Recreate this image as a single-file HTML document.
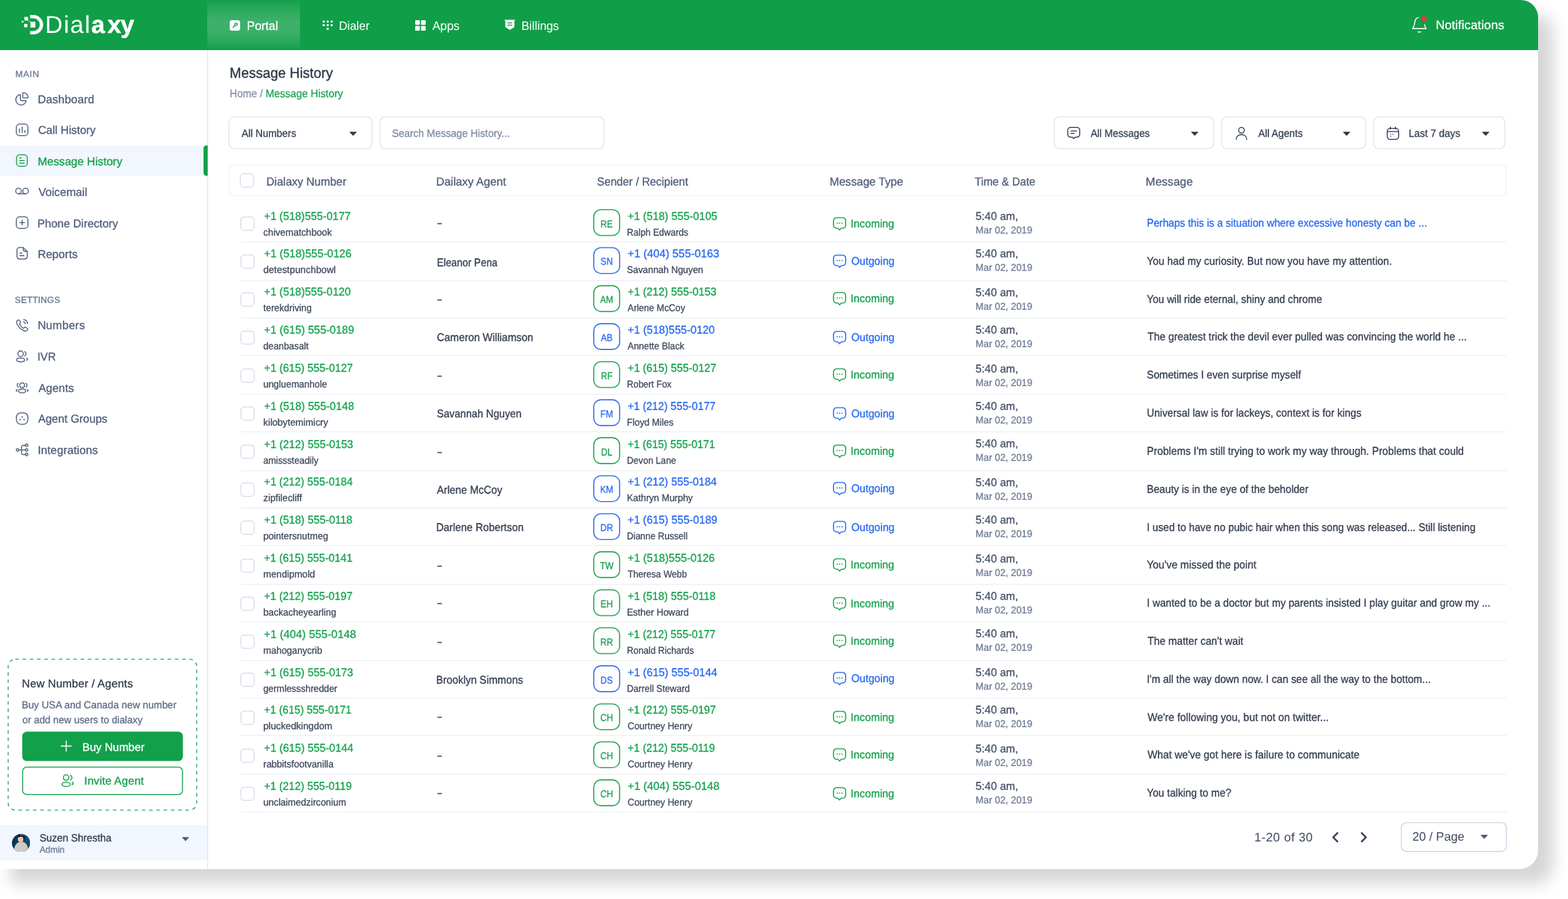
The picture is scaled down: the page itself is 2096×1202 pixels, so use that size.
<!DOCTYPE html>
<html lang="en"><head><meta charset="utf-8"><title>Dialaxy - Message History</title>
<style>
*{box-sizing:border-box;margin:0;padding:0}
html,body{width:2096px;height:1202px;background:#fff;overflow:hidden}
body{font-family:"Liberation Sans", sans-serif;position:relative;text-rendering:geometricPrecision}
#card{position:absolute;left:-6px;top:0;width:2062px;height:1162px;background:#fff;border-radius:0 23px 25px 0;box-shadow:20px 20px 21px rgba(0,0,0,0.165);}
#clip{will-change:transform;position:absolute;left:0;top:0;width:2056px;height:1162px;border-radius:0 23px 25px 0;overflow:hidden}
.t{position:absolute;white-space:nowrap;line-height:20px;-webkit-text-stroke:0.26px}
.b{position:absolute;display:block}
</style></head>
<body>
<div id="card"></div>
<div id="clip">
<svg class="b" style="left:0;top:0" width="2056" height="1162" viewBox="0 0 2056 1162" fill="none">
<path d="M277.60 67.00L277.60 1162.00" stroke="#e3e6ee" stroke-width="1.2"/>
<rect x="0.00" y="194.50" width="277.00" height="40.40" fill="#f2f6fe"/>
<path d="M277.6 194.5h-1.5a4 4 0 0 0-4 4v32.4a4 4 0 0 0 4 4h1.5z" fill="#12a04b"/>
<rect x="29.70" y="978.20" width="214.80" height="39.40" rx="6" fill="#12a04b"/>
<rect x="30.30" y="1025.60" width="213.60" height="36.80" rx="5.5" fill="#fff" stroke="#12a04b" stroke-width="1.3"/>
<rect x="0.00" y="1103.00" width="277.00" height="47.60" fill="#f2f6fe"/>
<rect x="306.30" y="156.40" width="191.00" height="42.20" rx="6.5" fill="#fff" stroke="#e1e5ef" stroke-width="1.35"/>
<rect x="508.10" y="156.40" width="299.10" height="42.20" rx="6.5" fill="#fff" stroke="#e1e5ef" stroke-width="1.35"/>
<rect x="1409.50" y="156.40" width="212.90" height="42.20" rx="6.5" fill="#fff" stroke="#e1e5ef" stroke-width="1.35"/>
<rect x="1633.10" y="156.40" width="192.40" height="42.20" rx="6.5" fill="#fff" stroke="#e1e5ef" stroke-width="1.35"/>
<rect x="1836.20" y="156.40" width="175.30" height="42.20" rx="6.5" fill="#fff" stroke="#e1e5ef" stroke-width="1.35"/>
<rect x="306.40" y="221.00" width="1706.80" height="40.50" rx="5" fill="#fff" stroke="#f0f2f8" stroke-width="1.3"/>
<rect x="321.25" y="232.45" width="17.90" height="17.70" rx="4.3" fill="#fff" stroke="#d7dcea" stroke-width="1.25"/>
<path d="M322.00 323.40L2013.80 323.40" stroke="#eef0f5" stroke-width="1.4"/>
<rect x="321.95" y="290.05" width="17.90" height="17.70" rx="4.3" fill="#fff" stroke="#d7dcea" stroke-width="1.25"/>
<rect x="793.70" y="280.30" width="34.60" height="34.50" rx="9.5" fill="#fff" stroke="#12a04b" stroke-width="1.35"/>
<path d="M322.00 375.40L2013.80 375.40" stroke="#eef0f5" stroke-width="1.4"/>
<rect x="321.95" y="340.88" width="17.90" height="17.70" rx="4.3" fill="#fff" stroke="#d7dcea" stroke-width="1.25"/>
<rect x="793.70" y="331.13" width="34.60" height="34.50" rx="9.5" fill="#fff" stroke="#2366f0" stroke-width="1.35"/>
<path d="M322.00 425.40L2013.80 425.40" stroke="#eef0f5" stroke-width="1.4"/>
<rect x="321.95" y="391.71" width="17.90" height="17.70" rx="4.3" fill="#fff" stroke="#d7dcea" stroke-width="1.25"/>
<rect x="793.70" y="381.96" width="34.60" height="34.50" rx="9.5" fill="#fff" stroke="#12a04b" stroke-width="1.35"/>
<path d="M322.00 475.40L2013.80 475.40" stroke="#eef0f5" stroke-width="1.4"/>
<rect x="321.95" y="442.54" width="17.90" height="17.70" rx="4.3" fill="#fff" stroke="#d7dcea" stroke-width="1.25"/>
<rect x="793.70" y="432.79" width="34.60" height="34.50" rx="9.5" fill="#fff" stroke="#2366f0" stroke-width="1.35"/>
<path d="M322.00 527.40L2013.80 527.40" stroke="#eef0f5" stroke-width="1.4"/>
<rect x="321.95" y="493.37" width="17.90" height="17.70" rx="4.3" fill="#fff" stroke="#d7dcea" stroke-width="1.25"/>
<rect x="793.70" y="483.62" width="34.60" height="34.50" rx="9.5" fill="#fff" stroke="#12a04b" stroke-width="1.35"/>
<path d="M322.00 577.40L2013.80 577.40" stroke="#eef0f5" stroke-width="1.4"/>
<rect x="321.95" y="544.20" width="17.90" height="17.70" rx="4.3" fill="#fff" stroke="#d7dcea" stroke-width="1.25"/>
<rect x="793.70" y="534.45" width="34.60" height="34.50" rx="9.5" fill="#fff" stroke="#2366f0" stroke-width="1.35"/>
<path d="M322.00 629.40L2013.80 629.40" stroke="#eef0f5" stroke-width="1.4"/>
<rect x="321.95" y="595.03" width="17.90" height="17.70" rx="4.3" fill="#fff" stroke="#d7dcea" stroke-width="1.25"/>
<rect x="793.70" y="585.28" width="34.60" height="34.50" rx="9.5" fill="#fff" stroke="#12a04b" stroke-width="1.35"/>
<path d="M322.00 679.40L2013.80 679.40" stroke="#eef0f5" stroke-width="1.4"/>
<rect x="321.95" y="645.86" width="17.90" height="17.70" rx="4.3" fill="#fff" stroke="#d7dcea" stroke-width="1.25"/>
<rect x="793.70" y="636.11" width="34.60" height="34.50" rx="9.5" fill="#fff" stroke="#2366f0" stroke-width="1.35"/>
<path d="M322.00 729.40L2013.80 729.40" stroke="#eef0f5" stroke-width="1.4"/>
<rect x="321.95" y="696.69" width="17.90" height="17.70" rx="4.3" fill="#fff" stroke="#d7dcea" stroke-width="1.25"/>
<rect x="793.70" y="686.94" width="34.60" height="34.50" rx="9.5" fill="#fff" stroke="#2366f0" stroke-width="1.35"/>
<path d="M322.00 781.40L2013.80 781.40" stroke="#eef0f5" stroke-width="1.4"/>
<rect x="321.95" y="747.52" width="17.90" height="17.70" rx="4.3" fill="#fff" stroke="#d7dcea" stroke-width="1.25"/>
<rect x="793.70" y="737.77" width="34.60" height="34.50" rx="9.5" fill="#fff" stroke="#12a04b" stroke-width="1.35"/>
<path d="M322.00 831.40L2013.80 831.40" stroke="#eef0f5" stroke-width="1.4"/>
<rect x="321.95" y="798.35" width="17.90" height="17.70" rx="4.3" fill="#fff" stroke="#d7dcea" stroke-width="1.25"/>
<rect x="793.70" y="788.60" width="34.60" height="34.50" rx="9.5" fill="#fff" stroke="#12a04b" stroke-width="1.35"/>
<path d="M322.00 883.40L2013.80 883.40" stroke="#eef0f5" stroke-width="1.4"/>
<rect x="321.95" y="849.18" width="17.90" height="17.70" rx="4.3" fill="#fff" stroke="#d7dcea" stroke-width="1.25"/>
<rect x="793.70" y="839.43" width="34.60" height="34.50" rx="9.5" fill="#fff" stroke="#12a04b" stroke-width="1.35"/>
<path d="M322.00 933.40L2013.80 933.40" stroke="#eef0f5" stroke-width="1.4"/>
<rect x="321.95" y="900.01" width="17.90" height="17.70" rx="4.3" fill="#fff" stroke="#d7dcea" stroke-width="1.25"/>
<rect x="793.70" y="890.26" width="34.60" height="34.50" rx="9.5" fill="#fff" stroke="#2366f0" stroke-width="1.35"/>
<path d="M322.00 983.40L2013.80 983.40" stroke="#eef0f5" stroke-width="1.4"/>
<rect x="321.95" y="950.84" width="17.90" height="17.70" rx="4.3" fill="#fff" stroke="#d7dcea" stroke-width="1.25"/>
<rect x="793.70" y="941.09" width="34.60" height="34.50" rx="9.5" fill="#fff" stroke="#12a04b" stroke-width="1.35"/>
<path d="M322.00 1035.40L2013.80 1035.40" stroke="#eef0f5" stroke-width="1.4"/>
<rect x="321.95" y="1001.67" width="17.90" height="17.70" rx="4.3" fill="#fff" stroke="#d7dcea" stroke-width="1.25"/>
<rect x="793.70" y="991.92" width="34.60" height="34.50" rx="9.5" fill="#fff" stroke="#12a04b" stroke-width="1.35"/>
<path d="M322.00 1085.40L2013.80 1085.40" stroke="#eef0f5" stroke-width="1.4"/>
<rect x="321.95" y="1052.50" width="17.90" height="17.70" rx="4.3" fill="#fff" stroke="#d7dcea" stroke-width="1.25"/>
<rect x="793.70" y="1042.75" width="34.60" height="34.50" rx="9.5" fill="#fff" stroke="#12a04b" stroke-width="1.35"/>
<rect x="1873.30" y="1099.80" width="140.20" height="38.70" rx="6.5" fill="#fff" stroke="#cfd6e4" stroke-width="1.35"/>
</svg>
<div class="b" style="left:0.00px;top:0.00px;width:2056.00px;height:67.00px;background:#109e48;"></div>
<div class="b" style="left:277.30px;top:0.00px;width:123.50px;height:67.00px;background:linear-gradient(180deg, rgba(255,255,255,0.02) 0%, rgba(255,255,255,0.11) 18%, rgba(255,255,255,0.19) 42%, rgba(255,255,255,0.19) 60%, rgba(255,255,255,0.10) 85%, rgba(255,255,255,0.0) 100%);"></div>
<svg class="b" style="left:28.00px;top:19.00px;" width="31" height="28" viewBox="0 0 31 28" fill="none">
<path d="M12.3 1.1h4.4a12.95 12.95 0 0 1 0 25.9h-4.4v-4.5h4.4a8.45 8.45 0 0 0 0-16.9h-4.400z" fill="#fff"/>
<rect x="12.7" y="10" width="6.5" height="7.8" fill="#fff"/>
<rect x="4.6" y="3.6" width="4.8" height="4.8" fill="#fff"/>
<rect x="0.9" y="8.8" width="2.5" height="2.5" rx="0.8" fill="#fff"/>
<rect x="4.2" y="12.9" width="4.4" height="4.5" fill="#fff"/>
<path d="M9 7.800 13.200 11" stroke="#fff" stroke-width="0.7"/>
</svg>
<div class="t" style="left:60.3px;top:23px;font-size:32.5px;color:#fff;letter-spacing:1.4px;-webkit-text-stroke:0"><span style="font-weight:400">Dial</span><span style="font-weight:700;letter-spacing:3.8px;-webkit-text-stroke:0.5px #fff">a</span><span style="font-weight:700;letter-spacing:-0.6px;-webkit-text-stroke:0.5px #fff">x</span><span style="font-weight:700;letter-spacing:0;-webkit-text-stroke:0.5px #fff">y</span></div>
<svg class="b" style="left:307.00px;top:27.00px;" width="14" height="14" viewBox="0 0 14 14" fill="none"><rect x="0" y="0" width="14" height="14" rx="3.2" fill="#fff"/>
<circle cx="8.5" cy="5.6" r="1.65" stroke="#2fa862" stroke-width="1.6"/><path d="M7.1 7 4.6 9.5" stroke="#2fa862" stroke-width="1.7" stroke-linecap="round"/></svg>
<div class="t hn" style="left:330.21px;top:25px;font-size:16.4px;color:#fff;transform:scaleX(0.9738);transform-origin:0 0;">Portal</div>
<svg class="b" style="left:431.00px;top:27.00px;" width="14" height="14" viewBox="0 0 14 14" fill="none"><circle cx="1.7" cy="1.7" r="1.55" fill="#fff"/><circle cx="7" cy="1.7" r="1.55" fill="#fff"/><circle cx="12.3" cy="1.7" r="1.55" fill="#fff"/><circle cx="1.7" cy="6.6" r="1.55" fill="#fff"/><circle cx="7" cy="6.6" r="1.55" fill="#fff"/><circle cx="12.3" cy="6.6" r="1.55" fill="#fff"/><circle cx="7" cy="11.5" r="1.55" fill="#fff"/></svg>
<div class="t hn" style="left:453.06px;top:25px;font-size:16.4px;color:#fff;-webkit-text-stroke:0;transform:scaleX(0.9585);transform-origin:0 0;">Dialer</div>
<svg class="b" style="left:554.50px;top:27.00px;" width="14" height="14" viewBox="0 0 14 14" fill="none"><rect x="0" y="0" width="6.2" height="6.2" rx="1" fill="#fff"/><rect x="7.8" y="0" width="6.2" height="6.2" rx="1" fill="#fff"/>
<rect x="0" y="7.8" width="6.2" height="6.2" rx="1" fill="#fff"/><rect x="7.8" y="7.8" width="6.2" height="6.2" rx="1" fill="#fff"/></svg>
<div class="t hn" style="left:577.80px;top:25px;font-size:16.4px;color:#fff;-webkit-text-stroke:0;transform:scaleX(0.9703);transform-origin:0 0;">Apps</div>
<svg class="b" style="left:674.00px;top:26.00px;" width="15" height="15" viewBox="0 0 15 15" fill="none"><path d="M0.3 0.5h14.4v1.1h-1.2v8.6l-6 3.9-6-3.9V1.6H0.3z" fill="#fff"/>
<path d="M4.3 4.6h6.4M4.3 7.6h6.4" stroke="#109e48" stroke-width="1.3"/></svg>
<div class="t hn" style="left:696.64px;top:25px;font-size:16.4px;color:#fff;-webkit-text-stroke:0;transform:scaleX(0.9680);transform-origin:0 0;">Billings</div>
<svg class="b" style="left:1886.00px;top:21.00px;" width="24" height="26" viewBox="0 0 24 26" fill="none"><path d="M9.8 2.6C6.9 3.2 5.6 5.6 5.3 8.4 5 11.6 4.2 14.4 2.3 17.2h18c-1-1.6-1.7-3.3-2-5.2" stroke="#fff" stroke-width="1.35" stroke-linecap="round" stroke-linejoin="round"/>
<path d="M9.5 21.3c0.5 1.1 2.7 1.1 3.4 0" stroke="#fff" stroke-width="1.35" stroke-linecap="round"/>
<circle cx="17.5" cy="4.3" r="3.5" fill="#f5333f"/></svg>
<div class="t hn" style="left:1919.20px;top:24px;font-size:16.6px;color:#fff;letter-spacing:0.100px;-webkit-text-stroke:0.2px #fff;">Notifications</div>
<div class="t sec" style="left:20.60px;top:89px;font-size:11.9px;color:#64728f;letter-spacing:0.567px;-webkit-text-stroke:0.25px #64728f;">MAIN</div>
<div class="t sec" style="left:19.80px;top:391px;font-size:11.9px;color:#64728f;letter-spacing:0.157px;-webkit-text-stroke:0.25px #64728f;">SETTINGS</div>
<svg class="b" style="left:21.10px;top:123.30px;overflow:visible;" width="17.2" height="17.2" viewBox="0 0 18 18" fill="none"><path d="M6.6 3.6A7.3 7.3 0 1 0 14.6 12.2H8.4a1.8 1.8 0 0 1-1.8-1.8z" stroke="#4d5b78" stroke-width="1.35" stroke-linecap="round" stroke-linejoin="round"/>
<path d="M9.9 1.7a0.9 0.9 0 0 1 1.1-0.9 7.4 7.4 0 0 1 6.3 6.3 0.9 0.9 0 0 1-0.9 1.1h-5.6a0.9 0.9 0 0 1-0.9-0.9z" stroke="#4d5b78" stroke-width="1.35" stroke-linecap="round" stroke-linejoin="round"/></svg>
<div class="t nav" style="left:50.40px;top:124px;font-size:15.2px;color:#4d5b78;letter-spacing:0.150px;">Dashboard</div>
<svg class="b" style="left:21.10px;top:164.60px;overflow:visible;" width="17.2" height="17.2" viewBox="0 0 18 18" fill="none"><rect x="0.9" y="0.9" width="16.2" height="16.2" rx="4.6" stroke="#4d5b78" stroke-width="1.35" stroke-linecap="round" stroke-linejoin="round"/>
<path d="M5.2 7.6v5.2M9 5v7.8M12.8 9.9v2.9" stroke="#4d5b78" stroke-width="1.35" stroke-linecap="round" stroke-linejoin="round"/></svg>
<div class="t nav" style="left:51.40px;top:165px;font-size:15.2px;color:#4d5b78;transform:scaleX(0.9896);transform-origin:0 0;">Call History</div>
<svg class="b" style="left:21.10px;top:206.00px;overflow:visible;" width="17.2" height="17.2" viewBox="0 0 18 18" fill="none"><rect x="1.2" y="0.9" width="15" height="16.2" rx="4.4" stroke="#12a04b" stroke-width="1.35" stroke-linecap="round" stroke-linejoin="round"/>
<path d="M5.3 5.3h2.8M5.3 9h6.8M5.3 12.7h6.8" stroke="#12a04b" stroke-width="1.35" stroke-linecap="round" stroke-linejoin="round"/></svg>
<div class="t nav" style="left:50.40px;top:207px;font-size:15.2px;color:#12a04b;transform:scaleX(1.0000);transform-origin:0 0;">Message History</div>
<svg class="b" style="left:21.10px;top:250.80px;overflow:visible;" width="17.2" height="17.2" viewBox="0 0 18 18" fill="none"><circle cx="3.9" cy="4.6" r="3.9" stroke="#4d5b78" stroke-width="1.35" stroke-linecap="round" stroke-linejoin="round"/><circle cx="13.8" cy="4.6" r="3.9" stroke="#4d5b78" stroke-width="1.35" stroke-linecap="round" stroke-linejoin="round"/><path d="M3.9 8.5h9.9" stroke="#4d5b78" stroke-width="1.35" stroke-linecap="round" stroke-linejoin="round"/></svg>
<div class="t nav" style="left:51.40px;top:248px;font-size:15.2px;color:#4d5b78;letter-spacing:0.025px;">Voicemail</div>
<svg class="b" style="left:21.10px;top:288.50px;overflow:visible;" width="17.2" height="17.2" viewBox="0 0 18 18" fill="none"><rect x="0.9" y="0.9" width="16.2" height="16.2" rx="4.6" stroke="#4d5b78" stroke-width="1.35" stroke-linecap="round" stroke-linejoin="round"/>
<path d="M9 5.6v6.8M5.6 9h6.8" stroke="#4d5b78" stroke-width="1.35" stroke-linecap="round" stroke-linejoin="round"/></svg>
<div class="t nav" style="left:50.41px;top:290px;font-size:15.2px;color:#4d5b78;transform:scaleX(0.9907);transform-origin:0 0;">Phone Directory</div>
<svg class="b" style="left:21.10px;top:329.60px;overflow:visible;" width="17.2" height="17.2" viewBox="0 0 18 18" fill="none"><path d="M10.3 0.9H5.4A3.6 3.6 0 0 0 1.8 4.5v9A3.6 3.6 0 0 0 5.4 17.1h7.2a3.6 3.6 0 0 0 3.6-3.6V6.5z" stroke="#4d5b78" stroke-width="1.35" stroke-linecap="round" stroke-linejoin="round"/>
<path d="M10.5 1.2v2.5a2.6 2.6 0 0 0 2.6 2.6h2.8" stroke="#4d5b78" stroke-width="1.35" stroke-linecap="round" stroke-linejoin="round"/>
<path d="M5.9 8.9h2.8M5.9 12.3h5.6" stroke="#4d5b78" stroke-width="1.35" stroke-linecap="round" stroke-linejoin="round"/></svg>
<div class="t nav" style="left:50.40px;top:331px;font-size:15.2px;color:#4d5b78;letter-spacing:0.033px;">Reports</div>
<svg class="b" style="left:21.10px;top:425.60px;overflow:visible;" width="17.2" height="17.2" viewBox="0 0 18 18" fill="none"><path d="M6.4 9.3c1.4 2.6 3 3.9 4.6 4.6 0.9-0.9 1.6-2.1 3-1.6l2.3 1.4c1.1 0.7 1 1.9 0.3 2.9-1 1.5-2.9 1.8-5.200 0.700C7.200 15.400 3.400 11.700 1.700 7.700 0.700 5.300 0.900 3.300 2.400 2.200c1-0.700 2.200-0.800 2.900 0.300l1.400 2.300c0.500 1.400-0.700 2.100-1.600 3z" stroke="#4d5b78" stroke-width="1.35" stroke-linecap="round" stroke-linejoin="round" transform="translate(0.3,0.3) scale(0.96)"/>
<path d="M11.2 1.5a6 6 0 0 1 5.300 5.300M10.900 4.600a3 3 0 0 1 2.500 2.500" stroke="#4d5b78" stroke-width="1.35" stroke-linecap="round" stroke-linejoin="round"/></svg>
<div class="t nav" style="left:50.40px;top:426px;font-size:15.2px;color:#4d5b78;letter-spacing:0.250px;">Numbers</div>
<svg class="b" style="left:21.10px;top:467.60px;overflow:visible;" width="17.2" height="17.2" viewBox="0 0 18 18" fill="none"><circle cx="6.8" cy="5.2" r="3.9" stroke="#4d5b78" stroke-width="1.35" stroke-linecap="round" stroke-linejoin="round"/><ellipse cx="6.8" cy="13.9" rx="5.6" ry="2.7" stroke="#4d5b78" stroke-width="1.35" stroke-linecap="round" stroke-linejoin="round"/>
<path d="M12.5 2.1a3.4 3.4 0 0 1 0 6.2M15.2 11.4c1.8 0.6 1.8 2.300 0 2.900" stroke="#4d5b78" stroke-width="1.35" stroke-linecap="round" stroke-linejoin="round"/></svg>
<div class="t nav" style="left:50.43px;top:468px;font-size:15.2px;color:#4d5b78;transform:scaleX(0.9739);transform-origin:0 0;">IVR</div>
<svg class="b" style="left:21.10px;top:509.50px;overflow:visible;" width="17.2" height="17.2" viewBox="0 0 18 18" fill="none"><circle cx="9" cy="5.3" r="3.4" stroke="#4d5b78" stroke-width="1.35" stroke-linecap="round" stroke-linejoin="round"/><ellipse cx="9" cy="13.3" rx="5" ry="2.6" stroke="#4d5b78" stroke-width="1.35" stroke-linecap="round" stroke-linejoin="round"/>
<path d="M14.4 2.6a3.2 3.2 0 0 1 0 5.4M3.6 2.6a3.200 3.200 0 0 0 0 5.400M16 11.300c1.700 0.500 1.700 2 0.200 2.600M2 11.300c-1.700 0.500-1.700 2-0.200 2.600" stroke="#4d5b78" stroke-width="1.35" stroke-linecap="round" stroke-linejoin="round"/></svg>
<div class="t nav" style="left:51.40px;top:510px;font-size:15.2px;color:#4d5b78;letter-spacing:0.020px;">Agents</div>
<svg class="b" style="left:21.10px;top:550.50px;overflow:visible;" width="17.2" height="17.2" viewBox="0 0 18 18" fill="none"><path d="M9 0.900c6 0 8.100 2.100 8.100 8.100s-2.100 8.100-8.100 8.100S0.900 15 0.900 9 3 0.900 9 0.900z" stroke="#4d5b78" stroke-width="1.35" stroke-linecap="round" stroke-linejoin="round"/>
<circle cx="9" cy="6.9" r="1.05" fill="#4d5b78"/><circle cx="6.3" cy="10.6" r="1.05" fill="#4d5b78"/><circle cx="11.7" cy="10.6" r="1.05" fill="#4d5b78"/></svg>
<div class="t nav" style="left:51.40px;top:551px;font-size:15.2px;color:#4d5b78;transform:scaleX(0.9882);transform-origin:0 0;">Agent Groups</div>
<svg class="b" style="left:21.10px;top:592.50px;overflow:visible;" width="17.2" height="17.2" viewBox="0 0 18 18" fill="none"><circle cx="2.600" cy="9" r="1.800" stroke="#4d5b78" stroke-width="1.35" stroke-linecap="round" stroke-linejoin="round"/><circle cx="15.300" cy="2.600" r="1.800" stroke="#4d5b78" stroke-width="1.35" stroke-linecap="round" stroke-linejoin="round"/><circle cx="15.300" cy="9" r="1.800" stroke="#4d5b78" stroke-width="1.35" stroke-linecap="round" stroke-linejoin="round"/><circle cx="15.300" cy="15.400" r="1.800" stroke="#4d5b78" stroke-width="1.35" stroke-linecap="round" stroke-linejoin="round"/>
<path d="M4.400 9h9.100M13.500 2.600h-3.200a2.200 2.200 0 0 0-2.200 2.200v8.400a2.200 2.200 0 0 0 2.200 2.200h3.200" stroke="#4d5b78" stroke-width="1.35" stroke-linecap="round" stroke-linejoin="round"/></svg>
<div class="t nav" style="left:50.40px;top:593px;font-size:15.2px;color:#4d5b78;letter-spacing:0.109px;">Integrations</div>
<svg class="b" style="left:10px;top:880px" width="255" height="205" fill="none"><rect x="0.95" y="1.4" width="251.95" height="201.7" rx="9.5" stroke="#2fae63" stroke-width="1.35" stroke-dasharray="4.7 5.0"/></svg>
<div class="t pt" style="left:29.20px;top:905px;font-size:15.0px;color:#2c3648;letter-spacing:0.144px;-webkit-text-stroke:0.25px #2c3648;">New Number / Agents</div>
<div class="t pd" style="left:29.21px;top:933px;font-size:13.5px;color:#5d6a85;transform:scaleX(0.9885);transform-origin:0 0;">Buy USA and Canada new number</div>
<div class="t pd" style="left:30.20px;top:953px;font-size:13.5px;color:#5d6a85;transform:scaleX(0.9770);transform-origin:0 0;">or add new users to dialaxy</div>
<svg class="b" style="left:81.30px;top:989.90px;" width="15" height="15" viewBox="0 0 15 15" fill="none"><path d="M7.5 0.7v13.6M0.7 7.5h13.6" stroke="#fff" stroke-width="1.35" stroke-linecap="round"/></svg>
<div class="t btn" style="left:110.20px;top:990px;font-size:15.0px;color:#fff;transform:scaleX(0.9988);transform-origin:0 0;">Buy Number</div>
<svg class="b" style="left:80.60px;top:1035.00px;overflow:visible;" width="20" height="18" viewBox="0 0 20 18" fill="none"><circle cx="7.4" cy="4.6" r="3.7" stroke="#12a04b" stroke-width="1.35" stroke-linecap="round" stroke-linejoin="round"/><ellipse cx="7.4" cy="13.7" rx="5.6" ry="2.9" stroke="#12a04b" stroke-width="1.35" stroke-linecap="round" stroke-linejoin="round"/>
<path d="M13.2 1.6a3.3 3.3 0 0 1 0 6.1M15.4 10.9c2 0.6 2 2.6 0 3.2" stroke="#12a04b" stroke-width="1.35" stroke-linecap="round" stroke-linejoin="round"/></svg>
<div class="t btn" style="left:112.60px;top:1035px;font-size:15.0px;color:#12a04b;letter-spacing:0.118px;">Invite Agent</div>
<svg class="b" style="left:16.10px;top:1114.50px;" width="24.4" height="24.4" viewBox="0 0 24.4 24.4" fill="none"><defs><clipPath id="av"><circle cx="12.2" cy="12.2" r="12.2"/></clipPath>
<linearGradient id="avg" x1="0" y1="0" x2="1" y2="0"><stop offset="0" stop-color="#09304d"/><stop offset="1" stop-color="#10507a"/></linearGradient></defs>
<g clip-path="url(#av)"><rect width="24.4" height="24.4" fill="url(#avg)"/><g transform="translate(0,-1.1)">
<path d="M2.6 26.4L2.6 24.4C3 17 5.600 13.400 9.800 11.800L14.600 11.600C19 13 21.400 16.600 21.900 24.400L21.9 26.4Z" fill="#d1cac3"/>
<path d="M9.900 9.800h4.400v2c-1.200 1.100-3.200 1.100-4.400 0z" fill="#d2a891"/>
<ellipse cx="11.500" cy="8.100" rx="3.700" ry="4" fill="#e5c6b5"/>
<path d="M7.300 6.200C7 2.600 9.300 0.800 12.200 0.800c3.200 0 5 2 4.500 5.300c0.300 1.200-0.200 2.500-1.200 3.300c0.300-1.800-0.300-3.300-1.300-4.200c-2-0.600-4.500-0.200-6.900 1z" fill="#1b1a21"/>
<path d="M11.200 1.500c2-0.700 4.200 0 4.700 2.100c-1.600-0.700-3.200-0.900-4.800-0.500z" fill="#6d7ea6"/></g></g></svg>
<div class="t pn" style="left:52.61px;top:1110px;font-size:14.0px;color:#2c3648;-webkit-text-stroke:0.25px #2c3648;transform:scaleX(0.9650);transform-origin:0 0;">Suzen Shrestha</div>
<div class="t pa" style="left:52.60px;top:1126px;font-size:11.9px;color:#6b778f;transform:scaleX(0.9909);transform-origin:0 0;">Admin</div>
<svg class="b" style="left:242.50px;top:1118.50px;" width="10" height="6" viewBox="0 0 10 6" fill="none"><path d="M0.8 0.8h8.400L5 5.300z" fill="#4d5b78" stroke="#4d5b78" stroke-width="0.9" stroke-linejoin="round"/></svg>
<div class="t title" style="left:307.24px;top:89px;font-size:19.3px;color:#2b3445;-webkit-text-stroke:0.3px #2b3445;transform:scaleX(0.9608);transform-origin:0 0;">Message History</div>
<div class="t bc" style="left:307.04px;top:116px;font-size:14.9px;color:#8791a7;transform:scaleX(0.9250);transform-origin:0 0;">Home /</div>
<div class="t bc" style="left:355.03px;top:116px;font-size:14.9px;color:#12a04b;-webkit-text-stroke:0.2px #12a04b;transform:scaleX(0.9333);transform-origin:0 0;">Message History</div>
<div class="t f" style="left:323.00px;top:169px;font-size:14.3px;color:#323d52;transform:scaleX(0.9359);transform-origin:0 0;">All Numbers</div>
<svg class="b" style="left:466.80px;top:175.80px;" width="10" height="6" viewBox="0 0 10 6" fill="none"><path d="M0.700 0.700h8.600L5 5.200z" fill="#2e3a4e" stroke="#2e3a4e" stroke-width="0.900" stroke-linejoin="round"/></svg>
<div class="t f" style="left:523.64px;top:169px;font-size:14.3px;color:#7d8aa3;transform:scaleX(0.9448);transform-origin:0 0;">Search Message History...</div>
<svg class="b" style="left:1426.00px;top:168.50px;" width="19" height="19" viewBox="0 0 19 19" fill="none"><path d="M5 1.300h8.600a3.700 3.700 0 0 1 3.700 3.700v5.600a3.700 3.700 0 0 1-3.700 3.700h-2.300L9.300 16.400 7.300 14.300H5a3.700 3.700 0 0 1-3.700-3.700V5A3.700 3.700 0 0 1 5 1.300z" stroke="#323d52" stroke-width="1.300" stroke-linejoin="round"/>
<path d="M5.500 6.100h7.600M5.500 9.400h4.400" stroke="#323d52" stroke-width="1.300" stroke-linecap="round"/></svg>
<div class="t f" style="left:1457.58px;top:169px;font-size:14.3px;color:#323d52;transform:scaleX(0.9294);transform-origin:0 0;">All Messages</div>
<svg class="b" style="left:1591.80px;top:175.80px;" width="10" height="6" viewBox="0 0 10 6" fill="none"><path d="M0.700 0.700h8.600L5 5.200z" fill="#2e3a4e" stroke="#2e3a4e" stroke-width="0.900" stroke-linejoin="round"/></svg>
<svg class="b" style="left:1651.00px;top:168.50px;" width="17" height="19" viewBox="0 0 17 19" fill="none"><circle cx="8.500" cy="5.100" r="3.800" stroke="#323d52" stroke-width="1.300"/>
<path d="M1.400 17.300c0-4 3.100-6.300 7.100-6.300s7.100 2.300 7.100 6.300" stroke="#323d52" stroke-width="1.300" stroke-linecap="round"/></svg>
<div class="t f" style="left:1681.77px;top:169px;font-size:14.3px;color:#323d52;transform:scaleX(0.9344);transform-origin:0 0;">All Agents</div>
<svg class="b" style="left:1795.40px;top:175.80px;" width="10" height="6" viewBox="0 0 10 6" fill="none"><path d="M0.700 0.700h8.600L5 5.200z" fill="#2e3a4e" stroke="#2e3a4e" stroke-width="0.900" stroke-linejoin="round"/></svg>
<svg class="b" style="left:1853.00px;top:168.50px;" width="18" height="19" viewBox="0 0 18 19" fill="none"><rect x="1.400" y="2.600" width="15.200" height="14.800" rx="3.800" stroke="#323d52" stroke-width="1.300"/>
<path d="M1.600 6.900h14.800M5.600 0.900v2.600M12.400 0.900v2.600" stroke="#323d52" stroke-width="1.300" stroke-linecap="round"/>
<path d="M5.300 10.400h1.300M8.300 10.400h1.300M5.300 13.200h1.300" stroke="#323d52" stroke-width="1.200"/></svg>
<div class="t f" style="left:1883.06px;top:169px;font-size:14.3px;color:#323d52;transform:scaleX(0.9444);transform-origin:0 0;">Last 7 days</div>
<svg class="b" style="left:1981.00px;top:175.80px;" width="10" height="6" viewBox="0 0 10 6" fill="none"><path d="M0.700 0.700h8.600L5 5.200z" fill="#2e3a4e" stroke="#2e3a4e" stroke-width="0.900" stroke-linejoin="round"/></svg>
<div class="t th" style="left:355.63px;top:234px;font-size:15.4px;color:#4d5b78;transform:scaleX(0.9771);transform-origin:0 0;">Dialaxy Number</div>
<div class="t th" style="left:583.41px;top:234px;font-size:15.4px;color:#4d5b78;transform:scaleX(0.9935);transform-origin:0 0;">Dailaxy Agent</div>
<div class="t th" style="left:798.41px;top:234px;font-size:15.4px;color:#4d5b78;transform:scaleX(0.9630);transform-origin:0 0;">Sender / Recipient</div>
<div class="t th" style="left:1109.42px;top:234px;font-size:15.4px;color:#4d5b78;transform:scaleX(0.9857);transform-origin:0 0;">Message Type</div>
<div class="t th" style="left:1303.39px;top:234px;font-size:15.4px;color:#4d5b78;transform:scaleX(0.9518);transform-origin:0 0;">Time &amp; Date</div>
<div class="t th" style="left:1531.60px;top:234px;font-size:15.4px;color:#4d5b78;letter-spacing:0.067px;">Message</div>
<div class="t num" style="left:352.80px;top:280px;font-size:14.9px;color:#12a04b;transform:scaleX(0.9746);transform-origin:0 0;">+1 (518)555-0177</div>
<div class="t sub" style="left:352.41px;top:301px;font-size:13.1px;color:#3b465c;transform:scaleX(0.9691);transform-origin:0 0;">chivematchbook</div>
<div class="t ag" style="left:584.02px;top:289px;font-size:14.9px;color:#2f394d;transform:scaleX(1.4500);transform-origin:0 0;">-</div>
<div class="t ini" style="left:793px;width:36px;text-align:center;top:290px;font-size:13.3px;color:#12a04b;-webkit-text-stroke:0.25px #12a04b;transform:scaleX(0.88)">RE</div>
<div class="t snum" style="left:839.01px;top:280px;font-size:14.9px;color:#12a04b;transform:scaleX(0.9746);transform-origin:0 0;">+1 (518) 555-0105</div>
<div class="t sname" style="left:838.27px;top:301px;font-size:13.1px;color:#3b465c;transform:scaleX(0.9239);transform-origin:0 0;">Ralph Edwards</div>
<svg class="b" style="left:1112.70px;top:290.30px;overflow:visible;" width="18.7" height="18.7" viewBox="0 0 18 18" fill="none"><path d="M5.2 1.1h7.6a4 4 0 0 1 4 4v5.5a4 4 0 0 1-4 4h-1.7L9 17 6.9 14.600H5.200a4 4 0 0 1-4-4V5.100a4 4 0 0 1 4-4z" stroke="#12a04b" stroke-width="1.35" stroke-linejoin="round"/>
<circle cx="5.9" cy="8" r="0.85" fill="#12a04b"/><circle cx="9" cy="8" r="0.85" fill="#12a04b"/><circle cx="12.1" cy="8" r="0.85" fill="#12a04b"/></svg>
<div class="t typ" style="left:1136.84px;top:290px;font-size:14.9px;color:#12a04b;-webkit-text-stroke:0.25px #12a04b;transform:scaleX(0.9661);transform-origin:0 0;">Incoming</div>
<div class="t tm" style="left:1304.01px;top:280px;font-size:14.9px;color:#445068;transform:scaleX(0.9857);transform-origin:0 0;">5:40 am,</div>
<div class="t dt" style="left:1304.02px;top:298px;font-size:13.1px;color:#6e7b93;transform:scaleX(0.9842);transform-origin:0 0;">Mar 02, 2019</div>
<div class="t msg" style="left:1533.23px;top:289px;font-size:14.9px;color:#2366f0;transform:scaleX(0.9235);transform-origin:0 0;">Perhaps this is a situation where excessive honesty can be ...</div>
<div class="t num" style="left:352.80px;top:330px;font-size:14.9px;color:#12a04b;transform:scaleX(0.9839);transform-origin:0 0;">+1 (518)555-0126</div>
<div class="t sub" style="left:352.40px;top:351px;font-size:13.1px;color:#3b465c;transform:scaleX(0.9866);transform-origin:0 0;">detestpunchbowl</div>
<div class="t ag" style="left:583.53px;top:342px;font-size:14.9px;color:#2f394d;transform:scaleX(0.8978);transform-origin:0 0;">Eleanor Pena</div>
<div class="t ini" style="left:793px;width:36px;text-align:center;top:340px;font-size:13.3px;color:#2366f0;-webkit-text-stroke:0.25px #2366f0;transform:scaleX(0.88)">SN</div>
<div class="t snum" style="left:839.00px;top:330px;font-size:14.9px;color:#2366f0;transform:scaleX(0.9975);transform-origin:0 0;">+1 (404) 555-0163</div>
<div class="t sname" style="left:838.25px;top:351px;font-size:13.1px;color:#3b465c;transform:scaleX(0.9462);transform-origin:0 0;">Savannah Nguyen</div>
<svg class="b" style="left:1112.70px;top:340.30px;overflow:visible;" width="18.7" height="18.7" viewBox="0 0 18 18" fill="none"><path d="M5.2 1.1h7.6a4 4 0 0 1 4 4v5.5a4 4 0 0 1-4 4h-1.7L9 17 6.9 14.600H5.200a4 4 0 0 1-4-4V5.100a4 4 0 0 1 4-4z" stroke="#2366f0" stroke-width="1.35" stroke-linejoin="round"/>
<circle cx="5.9" cy="8" r="0.85" fill="#2366f0"/><circle cx="9" cy="8" r="0.85" fill="#2366f0"/><circle cx="12.1" cy="8" r="0.85" fill="#2366f0"/></svg>
<div class="t typ" style="left:1137.80px;top:340px;font-size:14.9px;color:#2366f0;-webkit-text-stroke:0.25px #2366f0;transform:scaleX(0.9550);transform-origin:0 0;">Outgoing</div>
<div class="t tm" style="left:1304.01px;top:330px;font-size:14.9px;color:#445068;transform:scaleX(0.9857);transform-origin:0 0;">5:40 am,</div>
<div class="t dt" style="left:1304.02px;top:348px;font-size:13.1px;color:#6e7b93;transform:scaleX(0.9842);transform-origin:0 0;">Mar 02, 2019</div>
<div class="t msg" style="left:1533.23px;top:340px;font-size:14.9px;color:#2f394d;transform:scaleX(0.9311);transform-origin:0 0;">You had my curiosity. But now you have my attention.</div>
<div class="t num" style="left:352.80px;top:381px;font-size:14.9px;color:#12a04b;transform:scaleX(0.9756);transform-origin:0 0;">+1 (518)555-0120</div>
<div class="t sub" style="left:352.41px;top:402px;font-size:13.1px;color:#3b465c;transform:scaleX(0.9567);transform-origin:0 0;">terekdriving</div>
<div class="t ag" style="left:584.02px;top:391px;font-size:14.9px;color:#2f394d;transform:scaleX(1.4500);transform-origin:0 0;">-</div>
<div class="t ini" style="left:793px;width:36px;text-align:center;top:391px;font-size:13.3px;color:#12a04b;-webkit-text-stroke:0.25px #12a04b;transform:scaleX(0.88)">AM</div>
<div class="t snum" style="left:839.02px;top:381px;font-size:14.9px;color:#12a04b;transform:scaleX(0.9656);transform-origin:0 0;">+1 (212) 555-0153</div>
<div class="t sname" style="left:839.19px;top:402px;font-size:13.1px;color:#3b465c;transform:scaleX(0.9337);transform-origin:0 0;">Arlene McCoy</div>
<svg class="b" style="left:1112.70px;top:390.30px;overflow:visible;" width="18.7" height="18.7" viewBox="0 0 18 18" fill="none"><path d="M5.2 1.1h7.6a4 4 0 0 1 4 4v5.5a4 4 0 0 1-4 4h-1.7L9 17 6.9 14.600H5.200a4 4 0 0 1-4-4V5.100a4 4 0 0 1 4-4z" stroke="#12a04b" stroke-width="1.35" stroke-linejoin="round"/>
<circle cx="5.9" cy="8" r="0.85" fill="#12a04b"/><circle cx="9" cy="8" r="0.85" fill="#12a04b"/><circle cx="12.1" cy="8" r="0.85" fill="#12a04b"/></svg>
<div class="t typ" style="left:1136.84px;top:390px;font-size:14.9px;color:#12a04b;-webkit-text-stroke:0.25px #12a04b;transform:scaleX(0.9661);transform-origin:0 0;">Incoming</div>
<div class="t tm" style="left:1304.01px;top:382px;font-size:14.9px;color:#445068;transform:scaleX(0.9857);transform-origin:0 0;">5:40 am,</div>
<div class="t dt" style="left:1304.02px;top:400px;font-size:13.1px;color:#6e7b93;transform:scaleX(0.9842);transform-origin:0 0;">Mar 02, 2019</div>
<div class="t msg" style="left:1533.23px;top:391px;font-size:14.9px;color:#2f394d;transform:scaleX(0.9213);transform-origin:0 0;">You will ride eternal, shiny and chrome</div>
<div class="t num" style="left:352.80px;top:432px;font-size:14.9px;color:#12a04b;transform:scaleX(0.9779);transform-origin:0 0;">+1 (615) 555-0189</div>
<div class="t sub" style="left:352.42px;top:453px;font-size:13.1px;color:#3b465c;transform:scaleX(0.9438);transform-origin:0 0;">deanbasalt</div>
<div class="t ag" style="left:584.42px;top:442px;font-size:14.9px;color:#2f394d;transform:scaleX(0.9375);transform-origin:0 0;">Cameron Williamson</div>
<div class="t ini" style="left:793px;width:36px;text-align:center;top:442px;font-size:13.3px;color:#2366f0;-webkit-text-stroke:0.25px #2366f0;transform:scaleX(0.88)">AB</div>
<div class="t snum" style="left:839.01px;top:432px;font-size:14.9px;color:#2366f0;transform:scaleX(0.9805);transform-origin:0 0;">+1 (518)555-0120</div>
<div class="t sname" style="left:839.19px;top:453px;font-size:13.1px;color:#3b465c;transform:scaleX(0.9370);transform-origin:0 0;">Annette Black</div>
<svg class="b" style="left:1112.70px;top:442.30px;overflow:visible;" width="18.7" height="18.7" viewBox="0 0 18 18" fill="none"><path d="M5.2 1.1h7.6a4 4 0 0 1 4 4v5.5a4 4 0 0 1-4 4h-1.7L9 17 6.9 14.600H5.200a4 4 0 0 1-4-4V5.100a4 4 0 0 1 4-4z" stroke="#2366f0" stroke-width="1.35" stroke-linejoin="round"/>
<circle cx="5.9" cy="8" r="0.85" fill="#2366f0"/><circle cx="9" cy="8" r="0.85" fill="#2366f0"/><circle cx="12.1" cy="8" r="0.85" fill="#2366f0"/></svg>
<div class="t typ" style="left:1137.80px;top:442px;font-size:14.9px;color:#2366f0;-webkit-text-stroke:0.25px #2366f0;transform:scaleX(0.9550);transform-origin:0 0;">Outgoing</div>
<div class="t tm" style="left:1304.01px;top:432px;font-size:14.9px;color:#445068;transform:scaleX(0.9857);transform-origin:0 0;">5:40 am,</div>
<div class="t dt" style="left:1304.02px;top:450px;font-size:13.1px;color:#6e7b93;transform:scaleX(0.9842);transform-origin:0 0;">Mar 02, 2019</div>
<div class="t msg" style="left:1534.16px;top:441px;font-size:14.9px;color:#2f394d;transform:scaleX(0.9303);transform-origin:0 0;">The greatest trick the devil ever pulled was convincing the world he ...</div>
<div class="t num" style="left:352.80px;top:483px;font-size:14.9px;color:#12a04b;transform:scaleX(0.9664);transform-origin:0 0;">+1 (615) 555-0127</div>
<div class="t sub" style="left:352.41px;top:504px;font-size:13.1px;color:#3b465c;transform:scaleX(0.9517);transform-origin:0 0;">ungluemanhole</div>
<div class="t ag" style="left:584.02px;top:493px;font-size:14.9px;color:#2f394d;transform:scaleX(1.4500);transform-origin:0 0;">-</div>
<div class="t ini" style="left:793px;width:36px;text-align:center;top:493px;font-size:13.3px;color:#12a04b;-webkit-text-stroke:0.25px #12a04b;transform:scaleX(0.88)">RF</div>
<div class="t snum" style="left:839.02px;top:483px;font-size:14.9px;color:#12a04b;transform:scaleX(0.9631);transform-origin:0 0;">+1 (615) 555-0127</div>
<div class="t sname" style="left:838.27px;top:504px;font-size:13.1px;color:#3b465c;transform:scaleX(0.9203);transform-origin:0 0;">Robert Fox</div>
<svg class="b" style="left:1112.70px;top:492.30px;overflow:visible;" width="18.7" height="18.7" viewBox="0 0 18 18" fill="none"><path d="M5.2 1.1h7.6a4 4 0 0 1 4 4v5.5a4 4 0 0 1-4 4h-1.7L9 17 6.9 14.600H5.200a4 4 0 0 1-4-4V5.100a4 4 0 0 1 4-4z" stroke="#12a04b" stroke-width="1.35" stroke-linejoin="round"/>
<circle cx="5.9" cy="8" r="0.85" fill="#12a04b"/><circle cx="9" cy="8" r="0.85" fill="#12a04b"/><circle cx="12.1" cy="8" r="0.85" fill="#12a04b"/></svg>
<div class="t typ" style="left:1136.84px;top:492px;font-size:14.9px;color:#12a04b;-webkit-text-stroke:0.25px #12a04b;transform:scaleX(0.9661);transform-origin:0 0;">Incoming</div>
<div class="t tm" style="left:1304.01px;top:484px;font-size:14.9px;color:#445068;transform:scaleX(0.9857);transform-origin:0 0;">5:40 am,</div>
<div class="t dt" style="left:1304.02px;top:502px;font-size:13.1px;color:#6e7b93;transform:scaleX(0.9842);transform-origin:0 0;">Mar 02, 2019</div>
<div class="t msg" style="left:1533.23px;top:492px;font-size:14.9px;color:#2f394d;transform:scaleX(0.9219);transform-origin:0 0;">Sometimes I even surprise myself</div>
<div class="t num" style="left:352.80px;top:534px;font-size:14.9px;color:#12a04b;transform:scaleX(0.9779);transform-origin:0 0;">+1 (518) 555-0148</div>
<div class="t sub" style="left:352.41px;top:555px;font-size:13.1px;color:#3b465c;transform:scaleX(0.9674);transform-origin:0 0;">kilobytemimicry</div>
<div class="t ag" style="left:584.42px;top:544px;font-size:14.9px;color:#2f394d;transform:scaleX(0.9230);transform-origin:0 0;">Savannah Nguyen</div>
<div class="t ini" style="left:793px;width:36px;text-align:center;top:544px;font-size:13.3px;color:#2366f0;-webkit-text-stroke:0.25px #2366f0;transform:scaleX(0.88)">FM</div>
<div class="t snum" style="left:839.02px;top:534px;font-size:14.9px;color:#2366f0;transform:scaleX(0.9557);transform-origin:0 0;">+1 (212) 555-0177</div>
<div class="t sname" style="left:838.25px;top:555px;font-size:13.1px;color:#3b465c;transform:scaleX(0.9415);transform-origin:0 0;">Floyd Miles</div>
<svg class="b" style="left:1112.70px;top:544.30px;overflow:visible;" width="18.7" height="18.7" viewBox="0 0 18 18" fill="none"><path d="M5.2 1.1h7.6a4 4 0 0 1 4 4v5.5a4 4 0 0 1-4 4h-1.7L9 17 6.9 14.600H5.200a4 4 0 0 1-4-4V5.100a4 4 0 0 1 4-4z" stroke="#2366f0" stroke-width="1.35" stroke-linejoin="round"/>
<circle cx="5.9" cy="8" r="0.85" fill="#2366f0"/><circle cx="9" cy="8" r="0.85" fill="#2366f0"/><circle cx="12.1" cy="8" r="0.85" fill="#2366f0"/></svg>
<div class="t typ" style="left:1137.80px;top:544px;font-size:14.9px;color:#2366f0;-webkit-text-stroke:0.25px #2366f0;transform:scaleX(0.9550);transform-origin:0 0;">Outgoing</div>
<div class="t tm" style="left:1304.01px;top:534px;font-size:14.9px;color:#445068;transform:scaleX(0.9857);transform-origin:0 0;">5:40 am,</div>
<div class="t dt" style="left:1304.02px;top:552px;font-size:13.1px;color:#6e7b93;transform:scaleX(0.9842);transform-origin:0 0;">Mar 02, 2019</div>
<div class="t msg" style="left:1533.23px;top:543px;font-size:14.9px;color:#2f394d;transform:scaleX(0.9242);transform-origin:0 0;">Universal law is for lackeys, context is for kings</div>
<div class="t num" style="left:352.80px;top:585px;font-size:14.9px;color:#12a04b;transform:scaleX(0.9689);transform-origin:0 0;">+1 (212) 555-0153</div>
<div class="t sub" style="left:352.42px;top:606px;font-size:13.1px;color:#3b465c;transform:scaleX(0.9354);transform-origin:0 0;">amisssteadily</div>
<div class="t ag" style="left:584.02px;top:595px;font-size:14.9px;color:#2f394d;transform:scaleX(1.4500);transform-origin:0 0;">-</div>
<div class="t ini" style="left:793px;width:36px;text-align:center;top:595px;font-size:13.3px;color:#12a04b;-webkit-text-stroke:0.25px #12a04b;transform:scaleX(0.88)">DL</div>
<div class="t snum" style="left:839.02px;top:585px;font-size:14.9px;color:#12a04b;transform:scaleX(0.9500);transform-origin:0 0;">+1 (615) 555-0171</div>
<div class="t sname" style="left:838.26px;top:606px;font-size:13.1px;color:#3b465c;transform:scaleX(0.9300);transform-origin:0 0;">Devon Lane</div>
<svg class="b" style="left:1112.70px;top:594.30px;overflow:visible;" width="18.7" height="18.7" viewBox="0 0 18 18" fill="none"><path d="M5.2 1.1h7.6a4 4 0 0 1 4 4v5.5a4 4 0 0 1-4 4h-1.7L9 17 6.9 14.600H5.200a4 4 0 0 1-4-4V5.100a4 4 0 0 1 4-4z" stroke="#12a04b" stroke-width="1.35" stroke-linejoin="round"/>
<circle cx="5.9" cy="8" r="0.85" fill="#12a04b"/><circle cx="9" cy="8" r="0.85" fill="#12a04b"/><circle cx="12.1" cy="8" r="0.85" fill="#12a04b"/></svg>
<div class="t typ" style="left:1136.84px;top:594px;font-size:14.9px;color:#12a04b;-webkit-text-stroke:0.25px #12a04b;transform:scaleX(0.9661);transform-origin:0 0;">Incoming</div>
<div class="t tm" style="left:1304.01px;top:584px;font-size:14.9px;color:#445068;transform:scaleX(0.9857);transform-origin:0 0;">5:40 am,</div>
<div class="t dt" style="left:1304.02px;top:602px;font-size:13.1px;color:#6e7b93;transform:scaleX(0.9842);transform-origin:0 0;">Mar 02, 2019</div>
<div class="t msg" style="left:1533.23px;top:594px;font-size:14.9px;color:#2f394d;transform:scaleX(0.9338);transform-origin:0 0;">Problems I'm still trying to work my way through. Problems that could</div>
<div class="t num" style="left:352.80px;top:635px;font-size:14.9px;color:#12a04b;transform:scaleX(0.9642);transform-origin:0 0;">+1 (212) 555-0184</div>
<div class="t sub" style="left:352.41px;top:656px;font-size:13.1px;color:#3b465c;transform:scaleX(0.9755);transform-origin:0 0;">zipfilecliff</div>
<div class="t ag" style="left:584.42px;top:646px;font-size:14.9px;color:#2f394d;transform:scaleX(0.9355);transform-origin:0 0;">Arlene McCoy</div>
<div class="t ini" style="left:793px;width:36px;text-align:center;top:645px;font-size:13.3px;color:#2366f0;-webkit-text-stroke:0.25px #2366f0;transform:scaleX(0.88)">KM</div>
<div class="t snum" style="left:839.02px;top:635px;font-size:14.9px;color:#2366f0;transform:scaleX(0.9689);transform-origin:0 0;">+1 (212) 555-0184</div>
<div class="t sname" style="left:838.24px;top:656px;font-size:13.1px;color:#3b465c;transform:scaleX(0.9533);transform-origin:0 0;">Kathryn Murphy</div>
<svg class="b" style="left:1112.70px;top:644.30px;overflow:visible;" width="18.7" height="18.7" viewBox="0 0 18 18" fill="none"><path d="M5.2 1.1h7.6a4 4 0 0 1 4 4v5.5a4 4 0 0 1-4 4h-1.7L9 17 6.9 14.600H5.200a4 4 0 0 1-4-4V5.100a4 4 0 0 1 4-4z" stroke="#2366f0" stroke-width="1.35" stroke-linejoin="round"/>
<circle cx="5.9" cy="8" r="0.85" fill="#2366f0"/><circle cx="9" cy="8" r="0.85" fill="#2366f0"/><circle cx="12.1" cy="8" r="0.85" fill="#2366f0"/></svg>
<div class="t typ" style="left:1137.80px;top:644px;font-size:14.9px;color:#2366f0;-webkit-text-stroke:0.25px #2366f0;transform:scaleX(0.9550);transform-origin:0 0;">Outgoing</div>
<div class="t tm" style="left:1304.01px;top:636px;font-size:14.9px;color:#445068;transform:scaleX(0.9857);transform-origin:0 0;">5:40 am,</div>
<div class="t dt" style="left:1304.02px;top:654px;font-size:13.1px;color:#6e7b93;transform:scaleX(0.9842);transform-origin:0 0;">Mar 02, 2019</div>
<div class="t msg" style="left:1533.23px;top:645px;font-size:14.9px;color:#2f394d;transform:scaleX(0.9258);transform-origin:0 0;">Beauty is in the eye of the beholder</div>
<div class="t num" style="left:352.80px;top:686px;font-size:14.9px;color:#12a04b;transform:scaleX(0.9686);transform-origin:0 0;">+1 (518) 555-0118</div>
<div class="t sub" style="left:352.41px;top:707px;font-size:13.1px;color:#3b465c;transform:scaleX(0.9611);transform-origin:0 0;">pointersnutmeg</div>
<div class="t ag" style="left:583.48px;top:696px;font-size:14.9px;color:#2f394d;transform:scaleX(0.9358);transform-origin:0 0;">Darlene Robertson</div>
<div class="t ini" style="left:793px;width:36px;text-align:center;top:696px;font-size:13.3px;color:#2366f0;-webkit-text-stroke:0.25px #2366f0;transform:scaleX(0.88)">DR</div>
<div class="t snum" style="left:839.01px;top:686px;font-size:14.9px;color:#2366f0;transform:scaleX(0.9746);transform-origin:0 0;">+1 (615) 555-0189</div>
<div class="t sname" style="left:838.27px;top:707px;font-size:13.1px;color:#3b465c;transform:scaleX(0.9218);transform-origin:0 0;">Dianne Russell</div>
<svg class="b" style="left:1112.70px;top:696.30px;overflow:visible;" width="18.7" height="18.7" viewBox="0 0 18 18" fill="none"><path d="M5.2 1.1h7.6a4 4 0 0 1 4 4v5.5a4 4 0 0 1-4 4h-1.7L9 17 6.9 14.600H5.200a4 4 0 0 1-4-4V5.100a4 4 0 0 1 4-4z" stroke="#2366f0" stroke-width="1.35" stroke-linejoin="round"/>
<circle cx="5.9" cy="8" r="0.85" fill="#2366f0"/><circle cx="9" cy="8" r="0.85" fill="#2366f0"/><circle cx="12.1" cy="8" r="0.85" fill="#2366f0"/></svg>
<div class="t typ" style="left:1137.80px;top:696px;font-size:14.9px;color:#2366f0;-webkit-text-stroke:0.25px #2366f0;transform:scaleX(0.9550);transform-origin:0 0;">Outgoing</div>
<div class="t tm" style="left:1304.01px;top:686px;font-size:14.9px;color:#445068;transform:scaleX(0.9857);transform-origin:0 0;">5:40 am,</div>
<div class="t dt" style="left:1304.02px;top:704px;font-size:13.1px;color:#6e7b93;transform:scaleX(0.9842);transform-origin:0 0;">Mar 02, 2019</div>
<div class="t msg" style="left:1533.23px;top:696px;font-size:14.9px;color:#2f394d;transform:scaleX(0.9197);transform-origin:0 0;">I used to have no pubic hair when this song was released... Still listening</div>
<div class="t num" style="left:352.80px;top:737px;font-size:14.9px;color:#12a04b;transform:scaleX(0.9607);transform-origin:0 0;">+1 (615) 555-0141</div>
<div class="t sub" style="left:352.41px;top:758px;font-size:13.1px;color:#3b465c;transform:scaleX(0.9676);transform-origin:0 0;">mendipmold</div>
<div class="t ag" style="left:584.02px;top:747px;font-size:14.9px;color:#2f394d;transform:scaleX(1.4500);transform-origin:0 0;">-</div>
<div class="t ini" style="left:793px;width:36px;text-align:center;top:747px;font-size:13.3px;color:#12a04b;-webkit-text-stroke:0.25px #12a04b;transform:scaleX(0.88)">TW</div>
<div class="t snum" style="left:839.01px;top:737px;font-size:14.9px;color:#12a04b;transform:scaleX(0.9805);transform-origin:0 0;">+1 (518)555-0126</div>
<div class="t sname" style="left:839.19px;top:758px;font-size:13.1px;color:#3b465c;transform:scaleX(0.9267);transform-origin:0 0;">Theresa Webb</div>
<svg class="b" style="left:1112.70px;top:746.30px;overflow:visible;" width="18.7" height="18.7" viewBox="0 0 18 18" fill="none"><path d="M5.2 1.1h7.6a4 4 0 0 1 4 4v5.5a4 4 0 0 1-4 4h-1.7L9 17 6.9 14.600H5.200a4 4 0 0 1-4-4V5.100a4 4 0 0 1 4-4z" stroke="#12a04b" stroke-width="1.35" stroke-linejoin="round"/>
<circle cx="5.9" cy="8" r="0.85" fill="#12a04b"/><circle cx="9" cy="8" r="0.85" fill="#12a04b"/><circle cx="12.1" cy="8" r="0.85" fill="#12a04b"/></svg>
<div class="t typ" style="left:1136.84px;top:746px;font-size:14.9px;color:#12a04b;-webkit-text-stroke:0.25px #12a04b;transform:scaleX(0.9661);transform-origin:0 0;">Incoming</div>
<div class="t tm" style="left:1304.01px;top:738px;font-size:14.9px;color:#445068;transform:scaleX(0.9857);transform-origin:0 0;">5:40 am,</div>
<div class="t dt" style="left:1304.02px;top:756px;font-size:13.1px;color:#6e7b93;transform:scaleX(0.9842);transform-origin:0 0;">Mar 02, 2019</div>
<div class="t msg" style="left:1533.23px;top:746px;font-size:14.9px;color:#2f394d;transform:scaleX(0.9365);transform-origin:0 0;">You've missed the point</div>
<div class="t num" style="left:352.80px;top:788px;font-size:14.9px;color:#12a04b;transform:scaleX(0.9607);transform-origin:0 0;">+1 (212) 555-0197</div>
<div class="t sub" style="left:352.41px;top:809px;font-size:13.1px;color:#3b465c;transform:scaleX(0.9554);transform-origin:0 0;">backacheyearling</div>
<div class="t ag" style="left:584.02px;top:797px;font-size:14.9px;color:#2f394d;transform:scaleX(1.4500);transform-origin:0 0;">-</div>
<div class="t ini" style="left:793px;width:36px;text-align:center;top:798px;font-size:13.3px;color:#12a04b;-webkit-text-stroke:0.25px #12a04b;transform:scaleX(0.88)">EH</div>
<div class="t snum" style="left:839.02px;top:788px;font-size:14.9px;color:#12a04b;transform:scaleX(0.9636);transform-origin:0 0;">+1 (518) 555-0118</div>
<div class="t sname" style="left:838.24px;top:809px;font-size:13.1px;color:#3b465c;transform:scaleX(0.9553);transform-origin:0 0;">Esther Howard</div>
<svg class="b" style="left:1112.70px;top:798.30px;overflow:visible;" width="18.7" height="18.7" viewBox="0 0 18 18" fill="none"><path d="M5.2 1.1h7.6a4 4 0 0 1 4 4v5.5a4 4 0 0 1-4 4h-1.7L9 17 6.9 14.600H5.200a4 4 0 0 1-4-4V5.100a4 4 0 0 1 4-4z" stroke="#12a04b" stroke-width="1.35" stroke-linejoin="round"/>
<circle cx="5.9" cy="8" r="0.85" fill="#12a04b"/><circle cx="9" cy="8" r="0.85" fill="#12a04b"/><circle cx="12.1" cy="8" r="0.85" fill="#12a04b"/></svg>
<div class="t typ" style="left:1136.84px;top:798px;font-size:14.9px;color:#12a04b;-webkit-text-stroke:0.25px #12a04b;transform:scaleX(0.9661);transform-origin:0 0;">Incoming</div>
<div class="t tm" style="left:1304.01px;top:788px;font-size:14.9px;color:#445068;transform:scaleX(0.9857);transform-origin:0 0;">5:40 am,</div>
<div class="t dt" style="left:1304.02px;top:806px;font-size:13.1px;color:#6e7b93;transform:scaleX(0.9842);transform-origin:0 0;">Mar 02, 2019</div>
<div class="t msg" style="left:1533.23px;top:797px;font-size:14.9px;color:#2f394d;transform:scaleX(0.9263);transform-origin:0 0;">I wanted to be a doctor but my parents insisted I play guitar and grow my ...</div>
<div class="t num" style="left:352.80px;top:839px;font-size:14.9px;color:#12a04b;letter-spacing:0.019px;">+1 (404) 555-0148</div>
<div class="t sub" style="left:352.41px;top:860px;font-size:13.1px;color:#3b465c;transform:scaleX(0.9573);transform-origin:0 0;">mahoganycrib</div>
<div class="t ag" style="left:584.02px;top:849px;font-size:14.9px;color:#2f394d;transform:scaleX(1.4500);transform-origin:0 0;">-</div>
<div class="t ini" style="left:793px;width:36px;text-align:center;top:849px;font-size:13.3px;color:#12a04b;-webkit-text-stroke:0.25px #12a04b;transform:scaleX(0.88)">RR</div>
<div class="t snum" style="left:839.02px;top:839px;font-size:14.9px;color:#12a04b;transform:scaleX(0.9557);transform-origin:0 0;">+1 (212) 555-0177</div>
<div class="t sname" style="left:838.27px;top:860px;font-size:13.1px;color:#3b465c;transform:scaleX(0.9260);transform-origin:0 0;">Ronald Richards</div>
<svg class="b" style="left:1112.70px;top:848.30px;overflow:visible;" width="18.7" height="18.7" viewBox="0 0 18 18" fill="none"><path d="M5.2 1.1h7.6a4 4 0 0 1 4 4v5.5a4 4 0 0 1-4 4h-1.7L9 17 6.9 14.600H5.200a4 4 0 0 1-4-4V5.100a4 4 0 0 1 4-4z" stroke="#12a04b" stroke-width="1.35" stroke-linejoin="round"/>
<circle cx="5.9" cy="8" r="0.85" fill="#12a04b"/><circle cx="9" cy="8" r="0.85" fill="#12a04b"/><circle cx="12.1" cy="8" r="0.85" fill="#12a04b"/></svg>
<div class="t typ" style="left:1136.84px;top:848px;font-size:14.9px;color:#12a04b;-webkit-text-stroke:0.25px #12a04b;transform:scaleX(0.9661);transform-origin:0 0;">Incoming</div>
<div class="t tm" style="left:1304.01px;top:838px;font-size:14.9px;color:#445068;transform:scaleX(0.9857);transform-origin:0 0;">5:40 am,</div>
<div class="t dt" style="left:1304.02px;top:856px;font-size:13.1px;color:#6e7b93;transform:scaleX(0.9842);transform-origin:0 0;">Mar 02, 2019</div>
<div class="t msg" style="left:1534.16px;top:848px;font-size:14.9px;color:#2f394d;transform:scaleX(0.9288);transform-origin:0 0;">The matter can't wait</div>
<div class="t num" style="left:352.80px;top:890px;font-size:14.9px;color:#12a04b;transform:scaleX(0.9689);transform-origin:0 0;">+1 (615) 555-0173</div>
<div class="t sub" style="left:352.42px;top:911px;font-size:13.1px;color:#3b465c;transform:scaleX(0.9438);transform-origin:0 0;">germlessshredder</div>
<div class="t ag" style="left:583.48px;top:900px;font-size:14.9px;color:#2f394d;transform:scaleX(0.9358);transform-origin:0 0;">Brooklyn Simmons</div>
<div class="t ini" style="left:793px;width:36px;text-align:center;top:900px;font-size:13.3px;color:#2366f0;-webkit-text-stroke:0.25px #2366f0;transform:scaleX(0.88)">DS</div>
<div class="t snum" style="left:839.01px;top:890px;font-size:14.9px;color:#2366f0;transform:scaleX(0.9746);transform-origin:0 0;">+1 (615) 555-0144</div>
<div class="t sname" style="left:838.26px;top:911px;font-size:13.1px;color:#3b465c;transform:scaleX(0.9315);transform-origin:0 0;">Darrell Steward</div>
<svg class="b" style="left:1112.70px;top:898.30px;overflow:visible;" width="18.7" height="18.7" viewBox="0 0 18 18" fill="none"><path d="M5.2 1.1h7.6a4 4 0 0 1 4 4v5.5a4 4 0 0 1-4 4h-1.7L9 17 6.9 14.600H5.200a4 4 0 0 1-4-4V5.100a4 4 0 0 1 4-4z" stroke="#2366f0" stroke-width="1.35" stroke-linejoin="round"/>
<circle cx="5.9" cy="8" r="0.85" fill="#2366f0"/><circle cx="9" cy="8" r="0.85" fill="#2366f0"/><circle cx="12.1" cy="8" r="0.85" fill="#2366f0"/></svg>
<div class="t typ" style="left:1137.80px;top:898px;font-size:14.9px;color:#2366f0;-webkit-text-stroke:0.25px #2366f0;transform:scaleX(0.9550);transform-origin:0 0;">Outgoing</div>
<div class="t tm" style="left:1304.01px;top:890px;font-size:14.9px;color:#445068;transform:scaleX(0.9857);transform-origin:0 0;">5:40 am,</div>
<div class="t dt" style="left:1304.02px;top:908px;font-size:13.1px;color:#6e7b93;transform:scaleX(0.9842);transform-origin:0 0;">Mar 02, 2019</div>
<div class="t msg" style="left:1533.23px;top:899px;font-size:14.9px;color:#2f394d;transform:scaleX(0.9237);transform-origin:0 0;">I'm all the way down now. I can see all the way to the bottom...</div>
<div class="t num" style="left:352.80px;top:940px;font-size:14.9px;color:#12a04b;transform:scaleX(0.9516);transform-origin:0 0;">+1 (615) 555-0171</div>
<div class="t sub" style="left:352.41px;top:961px;font-size:13.1px;color:#3b465c;transform:scaleX(0.9745);transform-origin:0 0;">pluckedkingdom</div>
<div class="t ag" style="left:584.02px;top:949px;font-size:14.9px;color:#2f394d;transform:scaleX(1.4500);transform-origin:0 0;">-</div>
<div class="t ini" style="left:793px;width:36px;text-align:center;top:950px;font-size:13.3px;color:#12a04b;-webkit-text-stroke:0.25px #12a04b;transform:scaleX(0.88)">CH</div>
<div class="t snum" style="left:839.02px;top:940px;font-size:14.9px;color:#12a04b;transform:scaleX(0.9598);transform-origin:0 0;">+1 (212) 555-0197</div>
<div class="t sname" style="left:839.19px;top:961px;font-size:13.1px;color:#3b465c;transform:scaleX(0.9413);transform-origin:0 0;">Courtney Henry</div>
<svg class="b" style="left:1112.70px;top:950.30px;overflow:visible;" width="18.7" height="18.7" viewBox="0 0 18 18" fill="none"><path d="M5.2 1.1h7.6a4 4 0 0 1 4 4v5.5a4 4 0 0 1-4 4h-1.7L9 17 6.9 14.600H5.200a4 4 0 0 1-4-4V5.100a4 4 0 0 1 4-4z" stroke="#12a04b" stroke-width="1.35" stroke-linejoin="round"/>
<circle cx="5.9" cy="8" r="0.85" fill="#12a04b"/><circle cx="9" cy="8" r="0.85" fill="#12a04b"/><circle cx="12.1" cy="8" r="0.85" fill="#12a04b"/></svg>
<div class="t typ" style="left:1136.84px;top:950px;font-size:14.9px;color:#12a04b;-webkit-text-stroke:0.25px #12a04b;transform:scaleX(0.9661);transform-origin:0 0;">Incoming</div>
<div class="t tm" style="left:1304.01px;top:940px;font-size:14.9px;color:#445068;transform:scaleX(0.9857);transform-origin:0 0;">5:40 am,</div>
<div class="t dt" style="left:1304.02px;top:958px;font-size:13.1px;color:#6e7b93;transform:scaleX(0.9842);transform-origin:0 0;">Mar 02, 2019</div>
<div class="t msg" style="left:1534.16px;top:950px;font-size:14.9px;color:#2f394d;transform:scaleX(0.9376);transform-origin:0 0;">We're following you, but not on twitter...</div>
<div class="t num" style="left:352.80px;top:991px;font-size:14.9px;color:#12a04b;transform:scaleX(0.9699);transform-origin:0 0;">+1 (615) 555-0144</div>
<div class="t sub" style="left:352.41px;top:1012px;font-size:13.1px;color:#3b465c;transform:scaleX(0.9551);transform-origin:0 0;">rabbitsfootvanilla</div>
<div class="t ag" style="left:584.02px;top:1001px;font-size:14.9px;color:#2f394d;transform:scaleX(1.4500);transform-origin:0 0;">-</div>
<div class="t ini" style="left:793px;width:36px;text-align:center;top:1001px;font-size:13.3px;color:#12a04b;-webkit-text-stroke:0.25px #12a04b;transform:scaleX(0.88)">CH</div>
<div class="t snum" style="left:839.02px;top:991px;font-size:14.9px;color:#12a04b;transform:scaleX(0.9579);transform-origin:0 0;">+1 (212) 555-0119</div>
<div class="t sname" style="left:839.19px;top:1012px;font-size:13.1px;color:#3b465c;transform:scaleX(0.9413);transform-origin:0 0;">Courtney Henry</div>
<svg class="b" style="left:1112.70px;top:1000.30px;overflow:visible;" width="18.7" height="18.7" viewBox="0 0 18 18" fill="none"><path d="M5.2 1.1h7.6a4 4 0 0 1 4 4v5.5a4 4 0 0 1-4 4h-1.7L9 17 6.9 14.600H5.200a4 4 0 0 1-4-4V5.100a4 4 0 0 1 4-4z" stroke="#12a04b" stroke-width="1.35" stroke-linejoin="round"/>
<circle cx="5.9" cy="8" r="0.85" fill="#12a04b"/><circle cx="9" cy="8" r="0.85" fill="#12a04b"/><circle cx="12.1" cy="8" r="0.85" fill="#12a04b"/></svg>
<div class="t typ" style="left:1136.84px;top:1000px;font-size:14.9px;color:#12a04b;-webkit-text-stroke:0.25px #12a04b;transform:scaleX(0.9661);transform-origin:0 0;">Incoming</div>
<div class="t tm" style="left:1304.01px;top:992px;font-size:14.9px;color:#445068;transform:scaleX(0.9857);transform-origin:0 0;">5:40 am,</div>
<div class="t dt" style="left:1304.02px;top:1010px;font-size:13.1px;color:#6e7b93;transform:scaleX(0.9842);transform-origin:0 0;">Mar 02, 2019</div>
<div class="t msg" style="left:1534.16px;top:1000px;font-size:14.9px;color:#2f394d;transform:scaleX(0.9313);transform-origin:0 0;">What we've got here is failure to communicate</div>
<div class="t num" style="left:352.80px;top:1042px;font-size:14.9px;color:#12a04b;transform:scaleX(0.9612);transform-origin:0 0;">+1 (212) 555-0119</div>
<div class="t sub" style="left:352.41px;top:1063px;font-size:13.1px;color:#3b465c;transform:scaleX(0.9574);transform-origin:0 0;">unclaimedzirconium</div>
<div class="t ag" style="left:584.02px;top:1051px;font-size:14.9px;color:#2f394d;transform:scaleX(1.4500);transform-origin:0 0;">-</div>
<div class="t ini" style="left:793px;width:36px;text-align:center;top:1052px;font-size:13.3px;color:#12a04b;-webkit-text-stroke:0.25px #12a04b;transform:scaleX(0.88)">CH</div>
<div class="t snum" style="left:839.00px;top:1042px;font-size:14.9px;color:#12a04b;transform:scaleX(0.9992);transform-origin:0 0;">+1 (404) 555-0148</div>
<div class="t sname" style="left:839.19px;top:1063px;font-size:13.1px;color:#3b465c;transform:scaleX(0.9413);transform-origin:0 0;">Courtney Henry</div>
<svg class="b" style="left:1112.70px;top:1052.30px;overflow:visible;" width="18.7" height="18.7" viewBox="0 0 18 18" fill="none"><path d="M5.2 1.1h7.6a4 4 0 0 1 4 4v5.5a4 4 0 0 1-4 4h-1.7L9 17 6.9 14.600H5.200a4 4 0 0 1-4-4V5.100a4 4 0 0 1 4-4z" stroke="#12a04b" stroke-width="1.35" stroke-linejoin="round"/>
<circle cx="5.9" cy="8" r="0.85" fill="#12a04b"/><circle cx="9" cy="8" r="0.85" fill="#12a04b"/><circle cx="12.1" cy="8" r="0.85" fill="#12a04b"/></svg>
<div class="t typ" style="left:1136.84px;top:1052px;font-size:14.9px;color:#12a04b;-webkit-text-stroke:0.25px #12a04b;transform:scaleX(0.9661);transform-origin:0 0;">Incoming</div>
<div class="t tm" style="left:1304.01px;top:1042px;font-size:14.9px;color:#445068;transform:scaleX(0.9857);transform-origin:0 0;">5:40 am,</div>
<div class="t dt" style="left:1304.02px;top:1060px;font-size:13.1px;color:#6e7b93;transform:scaleX(0.9842);transform-origin:0 0;">Mar 02, 2019</div>
<div class="t msg" style="left:1533.23px;top:1051px;font-size:14.9px;color:#2f394d;transform:scaleX(0.9256);transform-origin:0 0;">You talking to me?</div>
<div class="t ft" style="left:1676.80px;top:1110px;font-size:16.4px;color:#3d485d;letter-spacing:0.456px;-webkit-text-stroke:0;">1-20 of 30</div>
<svg class="b" style="left:1779.30px;top:1111.80px;" width="12" height="15" viewBox="0 0 12 15" fill="none"><path d="M8.8 1.7 3.100 7.500 8.800 13.300" stroke="#2e3a4e" stroke-width="2.3" stroke-linecap="round" stroke-linejoin="round"/></svg>
<svg class="b" style="left:1817.40px;top:1111.80px;" width="12" height="15" viewBox="0 0 12 15" fill="none"><path d="M3.2 1.7 8.900 7.500 3.200 13.300" stroke="#2e3a4e" stroke-width="2.3" stroke-linecap="round" stroke-linejoin="round"/></svg>
<div class="t ft" style="left:1887.81px;top:1109px;font-size:16.4px;color:#3d485d;-webkit-text-stroke:0;transform:scaleX(0.9913);transform-origin:0 0;">20 / Page</div>
<svg class="b" style="left:1979.40px;top:1116.30px;" width="10" height="6" viewBox="0 0 10 6" fill="none"><path d="M0.700 0.700h8.600L5 5.200z" fill="#4d5b78" stroke="#4d5b78" stroke-width="0.900" stroke-linejoin="round"/></svg>
</div>
</body></html>
